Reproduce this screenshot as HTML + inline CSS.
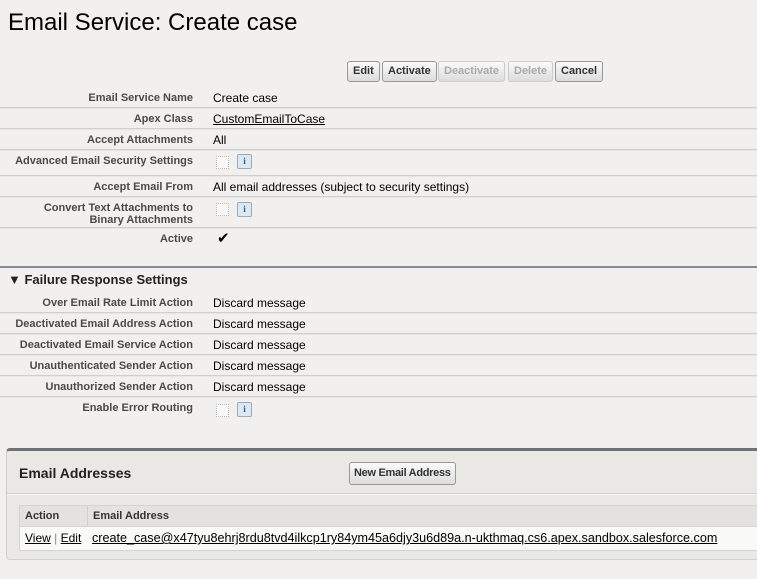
<!DOCTYPE html>
<html><head><meta charset="utf-8"><style>
body{margin:0;width:757px;height:579px;background:#f1f0ee;font-family:"Liberation Sans",Arial,sans-serif;position:relative;overflow:hidden;color:#000}
.a{position:absolute;white-space:nowrap}
.l{position:absolute;right:564px;font-size:11px;font-weight:bold;color:#4a4a4a;text-align:right;line-height:12px}
.v{position:absolute;left:213px;font-size:12px;color:#000}
.hr{position:absolute;left:0;width:757px;height:1px;background:#cfcfcd;border-bottom:1px solid #e6e6e4}
.btn{position:absolute;top:61px;height:19px;border:1px solid #999;border-radius:3px;background:linear-gradient(#fafafa,#dcdcdc);font-size:11px;font-weight:bold;line-height:19px;padding:0 5px;color:#333}
.dis{color:#aaa;border-color:#ccc}
.cb{position:absolute;left:216px;width:11px;height:11px;border:1px dotted #bbb;background:#f7f7f7}
.i{position:absolute;left:237px;width:13px;height:13px;border:1px solid #9ab;border-radius:2px;background:#dde8f2;color:#2a5a8a;font:bold 9px "Liberation Serif",serif;text-align:center;line-height:13px}
</style></head><body>
<div class="a" style="left:8px;top:9px;font-size:24px">Email Service: Create case</div>
<div class="btn" style="left:347px">Edit</div>
<div class="btn" style="left:382px">Activate</div>
<div class="btn dis" style="left:438px">Deactivate</div>
<div class="btn dis" style="left:508px">Delete</div>
<div class="btn" style="left:555px">Cancel</div>

<div class="l" style="top:92px">Email Service Name</div><div class="v a" style="top:91px">Create case</div>
<div class="hr" style="top:107px"></div>
<div class="l" style="top:113px">Apex Class</div><div class="v a" style="top:112px;text-decoration:underline">CustomEmailToCase</div>
<div class="hr" style="top:128px"></div>
<div class="l" style="top:134px">Accept Attachments</div><div class="v a" style="top:133px">All</div>
<div class="hr" style="top:149px"></div>
<div class="l" style="top:155px">Advanced Email Security Settings</div><div class="cb" style="top:156px"></div><div class="i" style="top:154px">i</div>
<div class="hr" style="top:175px"></div>
<div class="l" style="top:181px">Accept Email From</div><div class="v a" style="top:180px">All email addresses (subject to security settings)</div>
<div class="hr" style="top:196px"></div>
<div class="l" style="top:202px">Convert Text Attachments to<br>Binary Attachments</div><div class="cb" style="top:203px"></div><div class="i" style="top:202px">i</div>
<div class="hr" style="top:227px"></div>
<div class="l" style="top:233px">Active</div><div class="a" style="left:217px;top:229px;font-size:15px">✔</div>

<div class="a" style="left:0;top:266px;width:757px;height:2px;background:#858a93"></div>
<div class="a" style="left:8px;top:272px;font-size:13px;font-weight:bold;color:#222">▼ Failure Response Settings</div>
<div class="l" style="top:297px">Over Email Rate Limit Action</div><div class="v a" style="top:296px">Discard message</div>
<div class="hr" style="top:312px"></div>
<div class="l" style="top:318px">Deactivated Email Address Action</div><div class="v a" style="top:317px">Discard message</div>
<div class="hr" style="top:333px"></div>
<div class="l" style="top:339px">Deactivated Email Service Action</div><div class="v a" style="top:338px">Discard message</div>
<div class="hr" style="top:354px"></div>
<div class="l" style="top:360px">Unauthenticated Sender Action</div><div class="v a" style="top:359px">Discard message</div>
<div class="hr" style="top:375px"></div>
<div class="l" style="top:381px">Unauthorized Sender Action</div><div class="v a" style="top:380px">Discard message</div>
<div class="hr" style="top:396px"></div>
<div class="l" style="top:402px">Enable Error Routing</div><div class="cb" style="top:404px"></div><div class="i" style="top:402px">i</div>

<div class="a" style="left:6px;top:448px;width:751px;height:108px;background:#e9e8e5;border-top:3px solid #6f7179;border-left:1px solid #d0d0d0;border-bottom:1px solid #d0d0d0;border-radius:4px 0 0 4px"></div>
<div class="a" style="left:19px;top:465px;font-size:14px;font-weight:bold;color:#222">Email Addresses</div>
<div class="btn" style="left:349px;top:462px;height:21px;line-height:21px;padding:0 4px;font-size:11px;letter-spacing:-0.3px">New Email Address</div>
<div class="a" style="left:7px;top:493px;width:750px;height:1px;background:#cfcfcd;border-bottom:1px solid #f5f5f3"></div>
<div class="a" style="left:19px;top:505px;width:738px;height:44px;border:1px solid #d4d4d2;border-right:none;background:#f9f9f8"></div>
<div class="a" style="left:20px;top:506px;width:737px;height:20px;background:#e4e2df;border-bottom:1px solid #d4d4d2"></div>
<div class="a" style="left:87px;top:506px;width:1px;height:20px;background:#d0d0d0"></div>
<div class="a" style="left:25px;top:510px;font-size:11px;font-weight:bold;color:#333">Action</div>
<div class="a" style="left:93px;top:510px;font-size:11px;font-weight:bold;color:#333">Email Address</div>
<div class="a" style="left:25px;top:531px;font-size:12px"><u>View</u> <span style="color:#888">|</span> <u>Edit</u></div>
<div class="a" style="left:92px;top:531px;font-size:12.6px;text-decoration:underline">create_case@x47tyu8ehrj8rdu8tvd4ilkcp1ry84ym45a6djy3u6d89a.n-ukthmaq.cs6.apex.sandbox.salesforce.com</div>
</body></html>
